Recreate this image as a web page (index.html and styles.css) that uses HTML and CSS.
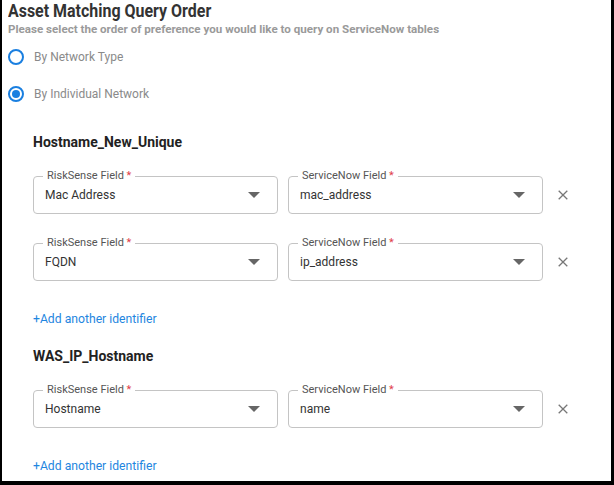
FILE: index.html
```html
<!DOCTYPE html>
<html>
<head>
<meta charset="utf-8">
<link rel="stylesheet" href="styles.css">
</head>
<body>
<div class="frame">
  <div class="header">
    <h1 class="title"><span class="title-text">Asset Matching Query Order</span></h1>
    <p class="subtitle">Please select the order of preference you would like to query on ServiceNow tables</p>
  </div>
  <div class="radios">
    <label class="radio"><span class="dot"></span><span class="radio-text">By Network Type</span></label>
    <label class="radio"><span class="dot checked"></span><span class="radio-text">By Individual Network</span></label>
  </div>

  <div class="group">
    <h2 class="group-title">Hostname_New_Unique</h2>
    <div class="row">
      <div class="field f1"><span class="flabel">RiskSense Field <span class="req">*</span></span><span class="value">Mac Address</span><span class="caret"></span></div>
      <div class="field f2"><span class="flabel">ServiceNow Field <span class="req">*</span></span><span class="value">mac_address</span><span class="caret"></span></div>
      <span class="close"><svg width="10" height="10" viewBox="0 0 10 10"><path d="M0.7 0.7L9.3 9.3M9.3 0.7L0.7 9.3" stroke="#777" stroke-width="1.3" fill="none"/></svg></span>
    </div>
    <div class="row">
      <div class="field f1"><span class="flabel">RiskSense Field <span class="req">*</span></span><span class="value">FQDN</span><span class="caret"></span></div>
      <div class="field f2"><span class="flabel">ServiceNow Field <span class="req">*</span></span><span class="value">ip_address</span><span class="caret"></span></div>
      <span class="close"><svg width="10" height="10" viewBox="0 0 10 10"><path d="M0.7 0.7L9.3 9.3M9.3 0.7L0.7 9.3" stroke="#777" stroke-width="1.3" fill="none"/></svg></span>
    </div>
    <a class="add">+Add another identifier</a>
  </div>

  <div class="group g2">
    <h2 class="group-title">WAS_IP_Hostname</h2>
    <div class="row">
      <div class="field f1"><span class="flabel">RiskSense Field <span class="req">*</span></span><span class="value">Hostname</span><span class="caret"></span></div>
      <div class="field f2"><span class="flabel">ServiceNow Field <span class="req">*</span></span><span class="value">name</span><span class="caret"></span></div>
      <span class="close"><svg width="10" height="10" viewBox="0 0 10 10"><path d="M0.7 0.7L9.3 9.3M9.3 0.7L0.7 9.3" stroke="#777" stroke-width="1.3" fill="none"/></svg></span>
    </div>
    <a class="add">+Add another identifier</a>
  </div>
</div>
</body>
</html>
```

FILE: styles.css
```css
* { box-sizing: border-box; }
html, body { margin: 0; padding: 0; background: #000; }
body { font-family: Roboto, "Liberation Sans", Arial, sans-serif; }

.frame {
  width: 614px;
  height: 485px;
  background: #fff;
  border-left: 2px solid #000;
  border-right: 3px solid #000;
  border-bottom: 4px solid #000;
  overflow: hidden;
}

.header { padding-left: 6px; }
.title {
  margin: 0;
  font-size: 19px;
  line-height: 22px;
  font-weight: 700;
  color: #333;
  white-space: nowrap;
}
.title-text {
  display: inline-block;
  transform: scaleX(0.84);
  transform-origin: left center;
}
.subtitle {
  margin: 0;
  font-size: 11.6px;
  line-height: 15px;
  font-weight: 700;
  color: #9a9a9a;
}

.radios { margin-top: 1px; padding-left: 6px; }
.radio {
  display: flex;
  align-items: center;
  height: 37px;
}
.dot {
  width: 16px;
  height: 16px;
  border: 2px solid #1a7fe0;
  border-radius: 50%;
  display: flex;
  align-items: center;
  justify-content: center;
}
.dot.checked::after {
  content: "";
  width: 8px;
  height: 8px;
  border-radius: 50%;
  background: #1a7fe0;
}
.radio-text {
  margin-left: 10px;
  font-size: 12px;
  color: #8a8a8a;
}

.group { padding-left: 31px; margin-top: 20px; }
.group.g2 { margin-top: 19px; }
.group-title {
  margin: 0;
  font-size: 14px;
  line-height: 20px;
  font-weight: 700;
  color: #222;
}

.row {
  display: flex;
  align-items: center;
  margin-top: 29px;
}
.group-title + .row { margin-top: 24px; }

.field {
  position: relative;
  height: 38px;
  border: 1px solid #c4c4c4;
  border-radius: 4px;
  display: flex;
  align-items: center;
  padding-left: 11px;
}
.f1 { width: 245px; }
.f2 { width: 255px; margin-left: 10px; }

.flabel {
  position: absolute;
  top: -8px;
  left: 9px;
  padding: 0 4px;
  background: #fff;
  font-size: 11px;
  line-height: 14px;
  color: #555;
}
.req { color: #e0404a; }

.value {
  flex: 1;
  font-size: 12px;
  color: #333;
}
.caret {
  width: 0;
  height: 0;
  border-left: 6px solid transparent;
  border-right: 6px solid transparent;
  border-top: 6px solid #666;
  margin-right: 17px;
}

.close {
  display: flex;
  margin-left: 15px;
}

.add {
  display: block;
  margin-top: 30px;
  font-size: 12.2px;
  line-height: 16px;
  color: #1f86e0;
  cursor: pointer;
}
```
